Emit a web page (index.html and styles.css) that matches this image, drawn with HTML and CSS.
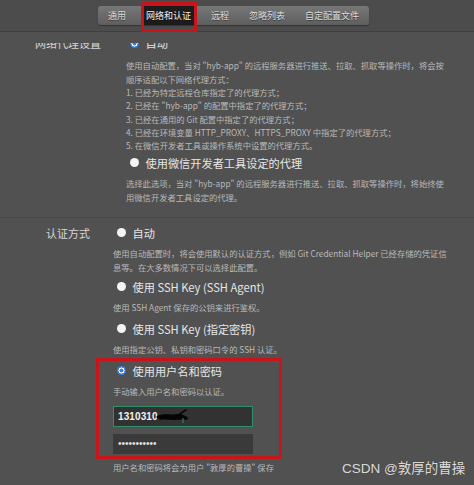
FILE: index.html
```html
<!DOCTYPE html>
<html lang="zh-CN">
<head>
<meta charset="utf-8">
<title>网络和认证</title>
<link rel="stylesheet" href="styles.css">
</head>
<body>
<div class="app">
  <header class="topbar">
    <nav class="tabs">
      <span class="tab">通用</span>
      <span class="tab active">网络和认证</span>
      <span class="tab">远程</span>
      <span class="tab">忽略列表</span>
      <span class="tab">自定配置文件</span>
    </nav>
  </header>
  <div class="viewport">
    <div class="scroller">
      <section class="section proxy">
        <div class="label">网络代理设置</div>
        <div class="content">
          <div class="option first"><span class="radio on"></span>自动</div>
          <p class="desc loose">使用自动配置，当对 "hyb-app" 的远程服务器进行推送、拉取、抓取等操作时，将会按<br>顺序适配以下网络代理方式：<br>1. 已经为特定远程仓库指定了的代理方式；<br>2. 已经在 "hyb-app" 的配置中指定了的代理方式；<br>3. 已经在通用的 Git 配置中指定了的代理方式；<br>4. 已经在环境变量 HTTP_PROXY、HTTPS_PROXY 中指定了的代理方式；<br>5. 在微信开发者工具或操作系统中设置的代理方式。</p>
          <div class="option tight"><span class="radio"></span>使用微信开发者工具设定的代理</div>
          <p class="desc">选择此选项，当对 "hyb-app" 的远程服务器进行推送、拉取、抓取等操作时，将始终使<br>用微信开发者工具设定的代理。</p>
        </div>
      </section>
      <section class="section auth">
        <div class="label">认证方式</div>
        <div class="content">
          <div class="option first"><span class="radio"></span>自动</div>
          <p class="desc">使用自动配置时，将会使用默认的认证方式，例如 Git Credential Helper 已经存储的凭证信<br>息等。在大多数情况下可以选择此配置。</p>
          <div class="option near"><span class="radio"></span>使用 SSH Key (SSH Agent)</div>
          <p class="desc">使用 SSH Agent 保存的公钥来进行鉴权。</p>
          <div class="option"><span class="radio"></span>使用 SSH Key (指定密钥)</div>
          <p class="desc">使用指定公钥、私钥和密码口令的 SSH 认证。</p>
          <div class="highlight">
            <div class="option first"><span class="radio on"></span>使用用户名和密码</div>
            <p class="desc">手动输入用户名和密码以认证。</p>
            <div class="field user">
              <span class="value">1310310</span>
              <svg class="scribble" width="34" height="16" viewBox="0 0 34 16" aria-hidden="true">
                <path d="M1 9 C5 6 9 6 13 7 C17 8 21 5 25 6 C28 7 30 9 32 10 L31 12 C27 11 22 12 18 12 C13 12 8 11 4 12 Z" fill="#050505"/>
                <path d="M2 9 C8 7 14 8 20 8 C24 8 27 9 30 10" stroke="#050505" stroke-width="3" fill="none" stroke-linecap="round"/>
                <path d="M24 6 C26 4 28 3 30 2" stroke="#050505" stroke-width="1.6" fill="none" stroke-linecap="round"/>
                <path d="M27 10 L27 15" stroke="#2f8f6c" stroke-width="1" fill="none"/>
              </svg>
            </div>
            <div class="field pass"><span class="value dots">•••••••••••</span></div>
          </div>
          <p class="desc after">用户名和密码将会为用户 "敦厚的曹操" 保存</p>
        </div>
      </section>
    </div>
  </div>
  <div class="watermark">CSDN @敦厚的曹操</div>
</div>
</body>
</html>
```

FILE: styles.css
```css
* { box-sizing: border-box; }
html, body {
  margin: 0;
  padding: 0;
  background: #515151;
}
body {
  font-family: "Noto Sans CJK SC", "Noto Sans", "Liberation Sans", sans-serif;
  color: #e2e2e2;
}
.app {
  position: relative;
  width: 474px;
  height: 485px;
  overflow: hidden;
  background: #515151;
}
.topbar {
  height: 32px;
  background: #4c4c4c;
  border-bottom: 1px solid #3f3f3f;
  display: flex;
  align-items: flex-start;
  padding: 6px 0 0 98px;
}
.tabs {
  display: flex;
  height: 19px;
  border-radius: 3px;
  background: linear-gradient(#777777, #5e5e5e);
  box-shadow: 0 1px 1px rgba(0,0,0,0.35);
}
.tab {
  padding: 0 10px;
  font-size: 9px;
  line-height: 19px;
  color: #dcdcdc;
  white-space: nowrap;
  text-shadow: 0 1px 0 rgba(0,0,0,0.45);
}
.tab.active {
  position: relative;
  padding: 0 4px;
  margin: 0 6px;
  background: #1c1c1c;
  color: #f2f2f2;
}
.tab.active::after {
  content: "";
  position: absolute;
  left: -1px;
  right: -2px;
  top: -4px;
  bottom: -7px;
  border: 3px solid #c8151b;
}
.viewport {
  margin-top: 11px;
  height: 442px;
  overflow: hidden;
}
.scroller {
  margin-top: -8px;
}
.section {
  display: grid;
  align-items: start;
}
.proxy {
  grid-template-columns: 91px 1fr;
  padding: 0 0 13px 35px;
}
.auth {
  grid-template-columns: 67px 1fr;
  padding: 7px 0 0 46px;
  border-top: 1px solid #474747;
}
.label {
  font-size: 11px;
  line-height: 16px;
  color: #d6d6d6;
  white-space: nowrap;
}
.content {
  min-width: 0;
}
.option {
  display: flex;
  align-items: center;
  gap: 7px;
  height: 16px;
  padding-left: 3.5px;
  margin-top: 6.3px;
  font-size: 11.2px;
  line-height: 16px;
  color: #e6e6e6;
  white-space: nowrap;
}
.option.first { margin-top: 0; }
.option.tight { margin-top: 2.4px; }
.option.near { margin-top: 5px; }
.radio {
  flex: none;
  width: 9px;
  height: 9px;
  border-radius: 50%;
  background: #f4f4f4;
}
.radio.on {
  background: radial-gradient(circle, #2f7ff2 0 1.8px, #ffffff 2.2px 2.9px, #2f7ff2 3.2px);
}
.desc {
  margin: 6.3px 0 0;
  font-size: 8.3px;
  line-height: 13.33px;
  color: #b9b9b9;
  white-space: nowrap;
}
.desc.loose { margin-top: 8.3px; }
.desc.after { margin-top: 2.3px; }
.highlight {
  width: 186px;
  margin: 1.3px 0 0 -17px;
  padding: 2px 0 2px 14px;
  border: 3px solid #c8151b;
}
.highlight .option { margin-top: 0; }
.field {
  position: relative;
  display: flex;
  align-items: center;
  width: 140px;
  padding-left: 4px;
  font-family: "Liberation Sans", "Noto Sans", sans-serif;
}
.field.user {
  height: 21px;
  margin-top: 7.3px;
  background: #323232;
  border: 1px solid #2f8f6c;
}
.field.pass {
  height: 20px;
  margin-top: 7px;
  background: #3a3a3a;
  border: 1px solid #3a3a3a;
}
.value {
  font-size: 10px;
  font-weight: bold;
  color: #f0f0f0;
  letter-spacing: 0.1px;
}
.value.dots {
  font-weight: normal;
  color: #e0e0e0;
  letter-spacing: 0;
}
.scribble {
  position: absolute;
  left: 42px;
  top: 1px;
}
.watermark {
  position: absolute;
  left: 342px;
  top: 460px;
  font-family: "Liberation Sans", "Noto Sans CJK SC", sans-serif;
  font-size: 13.5px;
  line-height: 18px;
  color: rgba(240,240,240,0.9);
  text-shadow: 0 0 1px rgba(0,0,0,0.3);
  white-space: nowrap;
}
```
